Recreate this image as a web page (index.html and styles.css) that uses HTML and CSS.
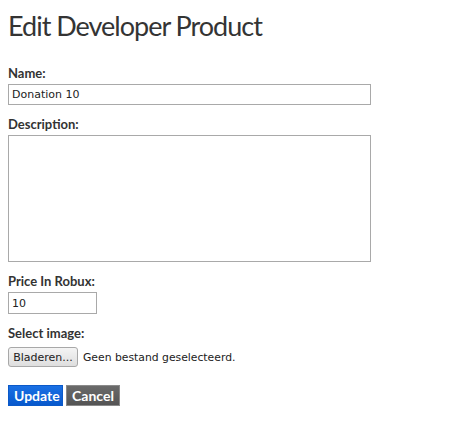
FILE: index.html
```html
<!DOCTYPE html>
<html lang="nl">
<head>
    <meta charset="UTF-8">
    <title>Edit Developer Product</title>
    <link rel="stylesheet" href="styles.css">
</head>
<body>
    <div class="page">
        <h1>Edit Developer Product</h1>

        <form class="product-form">
            <div class="field">
                <label for="name">Name:</label>
                <input type="text" id="name" class="text-input wide" value="Donation 10">
            </div>

            <div class="field">
                <label for="description">Description:</label>
                <textarea id="description" class="text-input wide area"></textarea>
            </div>

            <div class="field">
                <label for="price">Price In Robux:</label>
                <input type="text" id="price" class="text-input short" value="10">
            </div>

            <div class="field">
                <label>Select image:</label>
                <div class="file-row">
                    <button type="button" class="browse-btn">Bladeren...</button>
                    <span class="file-name">Geen bestand geselecteerd.</span>
                </div>
            </div>

            <div class="actions">
                <button type="submit" class="btn btn-update">Update</button>
                <button type="button" class="btn btn-cancel">Cancel</button>
            </div>
        </form>
    </div>
</body>
</html>
```

FILE: styles.css
```css
* {
    margin: 0;
    padding: 0;
    box-sizing: border-box;
}

body {
    background: #fff;
    font-family: Lato, 'Open Sans', sans-serif;
    color: #333;
}

.page {
    padding: 9px 8px;
}

h1 {
    font-family: Lato, sans-serif;
    font-weight: 400;
    font-size: 27px;
    line-height: 34px;
    color: #343434;
    letter-spacing: -1px;
    margin-bottom: 22px;
}

.field {
    margin-bottom: 11px;
}

label {
    display: block;
    font-weight: 700;
    font-size: 13px;
    line-height: 16px;
    color: #333;
    margin-bottom: 3px;
}

.text-input {
    display: block;
    font-family: 'DejaVu Sans', Tahoma, sans-serif;
    font-size: 11px;
    color: #222;
    border: 1px solid #a9a9a9;
    background: #fff;
    padding: 2px 3px;
    height: 21px;
}

.wide {
    width: 363px;
}

.short {
    width: 89px;
    height: 22px;
}

.area {
    height: 127px;
    resize: none;
}

/* file picker: native-looking button plus status text */
.file-row {
    display: flex;
    align-items: center;
    gap: 5px;
    margin-top: 6px;
}

.browse-btn {
    font-family: 'DejaVu Sans', Tahoma, sans-serif;
    font-size: 11px;
    color: #222;
    width: 70px;
    height: 20px;
    border: 1px solid #a8a8a8;
    border-radius: 3px;
    background: linear-gradient(#f4f4f4, #dedede);
}

.file-name {
    font-family: 'DejaVu Sans', Tahoma, sans-serif;
    font-size: 10.8px;
    color: #222;
}

.actions {
    display: flex;
    gap: 3px;
    margin-top: 18px;
}

.btn {
    font-family: Lato, sans-serif;
    font-weight: 700;
    font-size: 14px;
    color: #fff;
    height: 21px;
    padding: 0 5px;
    border: 1px solid;
}

.btn-update {
    width: 55px;
    background: linear-gradient(#1a70e4, #0758cc);
    border-color: #0b59c8;
}

.btn-cancel {
    width: 54px;
    background: linear-gradient(#6a6a6a, #545454);
    border-color: #8a8a8a;
}
```
